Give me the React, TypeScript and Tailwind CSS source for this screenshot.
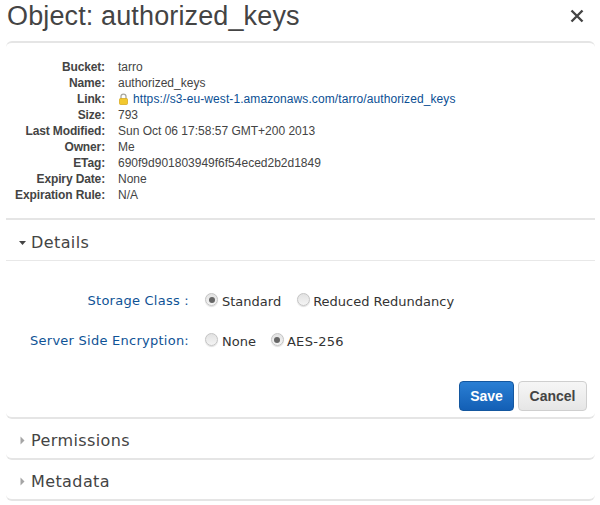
const rows: [string, string][] = [
  ["Bucket:", "tarro"],
  ["Name:", "authorized_keys"],
  ["Link:", ""],
  ["Size:", "793"],
  ["Last Modified:", "Sun Oct 06 17:58:57 GMT+200 2013"],
  ["Owner:", "Me"],
  ["ETag:", "690f9d901803949f6f54eced2b2d1849"],
  ["Expiry Date:", "None"],
  ["Expiration Rule:", "N/A"],
];

function Radio({ on }: { on?: boolean }) {
  return (
    <span className="w-[13px] h-[13px] mt-[-3px] rounded-full border border-[#c4c4c4] bg-gradient-to-b from-[#e2e2e2] to-[#f4f4f4] shadow-[0_1px_1px_#ddd] flex items-center justify-center shrink-0">
      {on && <span className="w-[6px] h-[6px] rounded-full bg-[#666]" />}
    </span>
  );
}

function Lock() {
  return (
    <svg width="11" height="12" viewBox="0 0 11 12" className="shrink-0">
      <path d="M3 6V3.6a2.5 2.5 0 0 1 5 0V6" fill="none" stroke="#a8a8a0" strokeWidth="1.3" />
      <rect x="1.5" y="5.5" width="8" height="6" rx="1" fill="#f2c82e" stroke="#d6a312" strokeWidth="0.7" />
    </svg>
  );
}

function Arrow({ open }: { open?: boolean }) {
  return open ? (
    <svg width="7" height="4" viewBox="0 0 7 4" className="shrink-0">
      <path d="M0 0h7L3.5 4z" fill="#444" />
    </svg>
  ) : (
    <svg width="5" height="9" viewBox="0 0 5 9" className="shrink-0">
      <path d="M0.5 0.5L4.5 4.5L0.5 8.5z" fill="#a5a5a5" />
    </svg>
  );
}

export default function App() {
  return (
    <div className="w-[600px] h-[505px] bg-white overflow-hidden font-['Liberation_Sans',sans-serif] text-[#444]">
      <div className="flex items-center justify-between h-[41px] pl-[7px] pr-[16px] pb-[9px]">
        <h1 className="text-[27px] leading-[34px] text-[#444] tracking-[0.13px]">Object: authorized_keys</h1>
        <svg width="14" height="14" viewBox="0 0 14 14" className="mt-[-1px]">
          <path d="M1.5 1.5L12.5 12.5M12.5 1.5L1.5 12.5" stroke="#444" strokeWidth="2.4" />
        </svg>
      </div>

      <div className="mx-[6px] w-[589px] border-t-2 border-[#e5e5e5] rounded-t-[6px] h-[177px] pt-[16px]">
        <div>
          {rows.map(([k, v]) => (
            <div key={k} className="flex h-[16px] items-center text-[12px] leading-[16px]">
              <div className="w-[99px] text-right font-bold text-[#444] whitespace-nowrap tracking-[-0.13px]">{k}</div>
              <div className="ml-[13px] flex items-center gap-[4px] whitespace-nowrap text-[#444]">
                {k === "Link:" ? (
                  <>
                    <Lock />
                    <span className="text-[#0b4f94] tracking-[0.09px]">https://s3-eu-west-1.amazonaws.com/tarro/authorized_keys</span>
                  </>
                ) : (
                  v
                )}
              </div>
            </div>
          ))}
        </div>
      </div>

      <div className="mx-[6px] w-[589px] h-[201px] border-t-2 border-b-2 border-t-[#e5e5e5] border-b-[#e5e5e5] rounded-[6px] rounded-t-none flex flex-col font-['DejaVu_Sans',sans-serif]">
        <div className="h-[41px] flex items-center border-b border-[#e8e8e8] pl-[13px] gap-[5px] shrink-0 pt-[6px]">
          <Arrow open />
          <span className="text-[16px] text-[#444] tracking-[0.4px]">Details</span>
        </div>
        <div className="text-[13px] leading-[16px] mt-[32px] flex items-center h-[16px]">
          <div className="w-[183px] text-right text-[#0f5396] tracking-[0.25px] whitespace-nowrap">Storage Class :</div>
          <div className="ml-[16px] flex items-center gap-[4px]"><Radio on /><span className="text-[#333] mt-[2px]">Standard</span></div>
          <div className="ml-[16px] flex items-center gap-[3px]"><Radio /><span className="text-[#333] mt-[2px]">Reduced Redundancy</span></div>
        </div>
        <div className="text-[13px] leading-[16px] mt-[24px] flex items-center h-[16px]">
          <div className="w-[183px] text-right text-[#0f5396] tracking-[0.25px] whitespace-nowrap">Server Side Encryption:</div>
          <div className="ml-[16px] flex items-center gap-[4px]"><Radio /><span className="text-[#333] mt-[2px]">None</span></div>
          <div className="ml-[15px] flex items-center gap-[3px]"><Radio on /><span className="text-[#333] mt-[2px] tracking-[0.3px]">AES-256</span></div>
        </div>
        <div className="mt-[32px] flex justify-end gap-[4px] pr-[8px] font-['Liberation_Sans',sans-serif]">
          <button className="w-[55px] h-[30px] rounded-[4px] border border-[#14579f] bg-gradient-to-b from-[#2a7fd4] to-[#135fb5] text-white text-[14px] font-bold">Save</button>
          <button className="w-[69px] h-[30px] rounded-[4px] border border-[#cfcfcf] bg-gradient-to-b from-[#f6f6f6] to-[#e6e6e6] text-[#444] text-[14px] font-bold">Cancel</button>
        </div>
      </div>

      {["Permissions", "Metadata"].map((t) => (
        <div key={t} className="mx-[6px] w-[589px] h-[41px] border-b-2 border-[#e5e5e5] rounded-b-[6px] flex items-center pl-[14px] gap-[6px] pt-[4px] font-['DejaVu_Sans',sans-serif]">
          <Arrow />
          <span className="text-[16px] text-[#444] tracking-[0.4px]">{t}</span>
        </div>
      ))}
    </div>
  );
}
